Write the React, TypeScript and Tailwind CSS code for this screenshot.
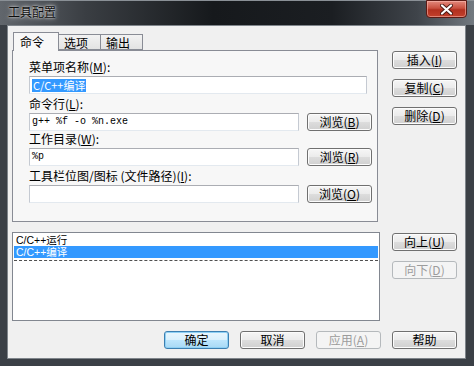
import type { ReactNode } from 'react';
import clsx from 'clsx';

const font = "font-['Noto_Sans_CJK_SC','Noto_Sans',sans-serif]";

const Btn = ({ children, disabled, primary }: { children: ReactNode; disabled?: boolean; primary?: boolean }) => (
  <div
    className={clsx(
      'w-[65px] h-[18px] shrink-0 flex items-center justify-center rounded-[3px] border text-[12px] leading-none',
      disabled
        ? 'border-[#b5b9bc] bg-[#f4f4f4] text-[#9c9c9c]'
        : primary
          ? 'border-[#3c7fb1] bg-[linear-gradient(#eaf6fd_0%,#d9f0fc_50%,#bee6fd_50%,#a7d9f5_100%)] text-black shadow-[inset_0_0_0_1px_#8fd0f4]'
          : 'border-[#707070] bg-[linear-gradient(#f6f6f6_0%,#ebebeb_50%,#dddddd_50%,#d0d0d0_100%)] text-black shadow-[inset_0_0_0_1px_#fcfcfc]'
    )}
  >
    {children}
  </div>
);

const Label = ({ text, k }: { text: string; k: string }) => (
  <div className="h-[14px] text-[12px] leading-[14px] text-black whitespace-nowrap">
    {text}(<u>{k}</u>):
  </div>
);

const Field = ({ width, children }: { width: string; children?: ReactNode }) => (
  <div
    className={clsx(
      'h-[18px] bg-white border border-[#c5cad2] border-t-[#abadb3] border-b-[#e3e9ef] flex items-center pl-[2px]',
      width
    )}
  >
    {children}
  </div>
);

const listText = "font-['Liberation_Sans','Noto_Sans_CJK_SC',sans-serif] text-[10.5px] leading-[12px]";

const App = () => {
  return (
    <div className={clsx('w-[474px] h-[366px] bg-[#3b4046] flex flex-col relative overflow-hidden', font)}>
      {/* Title bar */}
      <div className="h-[25px] shrink-0 flex items-start bg-[linear-gradient(to_right,#61666c_0%,#3a3e43_18%,#16191c_45%,#1b1e22_70%,#3f444a_88%,#727980_100%)] border-t border-[#8a9096]">
        <span className="ml-[8px] mt-[4px] text-[12px] leading-[14px] text-[#0c0c0c] [text-shadow:0_0_5px_rgba(255,255,255,0.9),0_0_2px_rgba(255,255,255,0.8)]">
          工具配置
        </span>
        <div className="ml-auto mr-[7px] -mt-px w-[41px] h-[18px] rounded-b-[4px] border border-[#5c1a14] bg-[linear-gradient(#e3897c_0%,#c9503f_45%,#b2301f_55%,#c2402c_100%)] flex items-center justify-center shadow-[inset_0_0_0_1px_rgba(255,200,190,0.5)]">
          <svg width="13" height="11" viewBox="0 0 13 11">
            <path d="M2 1.5 L11 9.5 M11 1.5 L2 9.5" stroke="#4a1a14" strokeWidth="4" strokeLinecap="round" />
            <path d="M2 1.5 L11 9.5 M11 1.5 L2 9.5" stroke="#ffffff" strokeWidth="2.2" strokeLinecap="round" />
          </svg>
        </div>
      </div>

      {/* Client area */}
      <div className="ml-[7px] mr-[8px] mb-[7px] flex-1 bg-[#f0f0f0] border border-[#7f858b] flex flex-col pl-[4px] pr-[8px] pt-[5px]">
        {/* Top: tabs + right buttons */}
        <div className="flex gap-[14px]">
          <div className="w-[366px] flex flex-col">
            <div className="h-[19px] flex items-end pl-px">
              <div className="h-[19px] w-[46px] bg-[#f7f7f7] border border-b-0 border-[#898c95] text-[12px] leading-[17px] pl-[6px] -mb-px relative z-10">
                命令
              </div>
              <div className="h-[16px] w-[42px] bg-[linear-gradient(#f2f2f2,#e3e3e3)] border border-l-0 border-[#898c95] text-[12px] leading-[15px] pl-[5px]">
                选项
              </div>
              <div className="h-[16px] w-[42px] bg-[linear-gradient(#f2f2f2,#e3e3e3)] border border-l-0 border-[#898c95] text-[12px] leading-[15px] pl-[5px]">
                输出
              </div>
            </div>
            <div className="h-[172px] bg-[#f7f7f7] border border-[#898c95] flex flex-col pl-[16px] pt-[9px]">
              <Label text="菜单项名称" k="M" />
              <div className="mt-[2px]">
                <Field width="w-[338px]">
                  <span className="bg-[#3399ff] text-white text-[11px] leading-[13px] px-px">C/C++编译</span>
                </Field>
              </div>
              <div className="mt-[3px]">
                <Label text="命令行" k="L" />
              </div>
              <div className="mt-[2px] flex items-center gap-[8px]">
                <Field width="w-[270px]">
                  <span className="text-[10px] leading-none font-['Liberation_Mono',monospace] text-black">g++ %f -o %n.exe</span>
                </Field>
                <Btn>浏览(<u>B</u>)</Btn>
              </div>
              <div className="mt-px">
                <Label text="工作目录" k="W" />
              </div>
              <div className="mt-[2px] flex items-center gap-[8px]">
                <Field width="w-[270px]">
                  <span className="text-[10px] leading-none font-['Liberation_Mono',monospace] text-black">%p</span>
                </Field>
                <Btn>浏览(<u>R</u>)</Btn>
              </div>
              <div className="mt-[3px]">
                <Label text="工具栏位图/图标 (文件路径)" k="I" />
              </div>
              <div className="mt-[2px] flex items-center gap-[8px]">
                <Field width="w-[270px]" />
                <Btn>浏览(<u>O</u>)</Btn>
              </div>
            </div>
          </div>
          <div className="flex flex-col pt-[20px] gap-[10px]">
            <Btn>插入(<u>I</u>)</Btn>
            <Btn>复制(<u>C</u>)</Btn>
            <Btn>删除(<u>D</u>)</Btn>
          </div>
        </div>

        {/* List + move buttons */}
        <div className="mt-[10px] flex gap-[12px]">
          <div className="w-[368px] h-[89px] bg-white border border-[#828790] pt-px px-px">
            <div className={clsx('h-[12px] text-black pl-[2px]', listText)}>C/C++运行</div>
            <div className={clsx('h-[12px] text-white bg-[#3399ff] pl-[2px]', listText)}>C/C++编译</div>
            <div className="mt-[2px] border-t border-dashed border-[#505050]" />
          </div>
          <div className="flex flex-col pt-px gap-[10px]">
            <Btn>向上(<u>U</u>)</Btn>
            <Btn disabled>向下(<u>D</u>)</Btn>
          </div>
        </div>

        {/* Bottom buttons */}
        <div className="mt-[10px] flex justify-end gap-[11px]">
          <Btn primary>确定</Btn>
          <Btn>取消</Btn>
          <Btn disabled>应用(<u>A</u>)</Btn>
          <Btn>帮助</Btn>
        </div>
      </div>
    </div>
  );
};

export default App;
